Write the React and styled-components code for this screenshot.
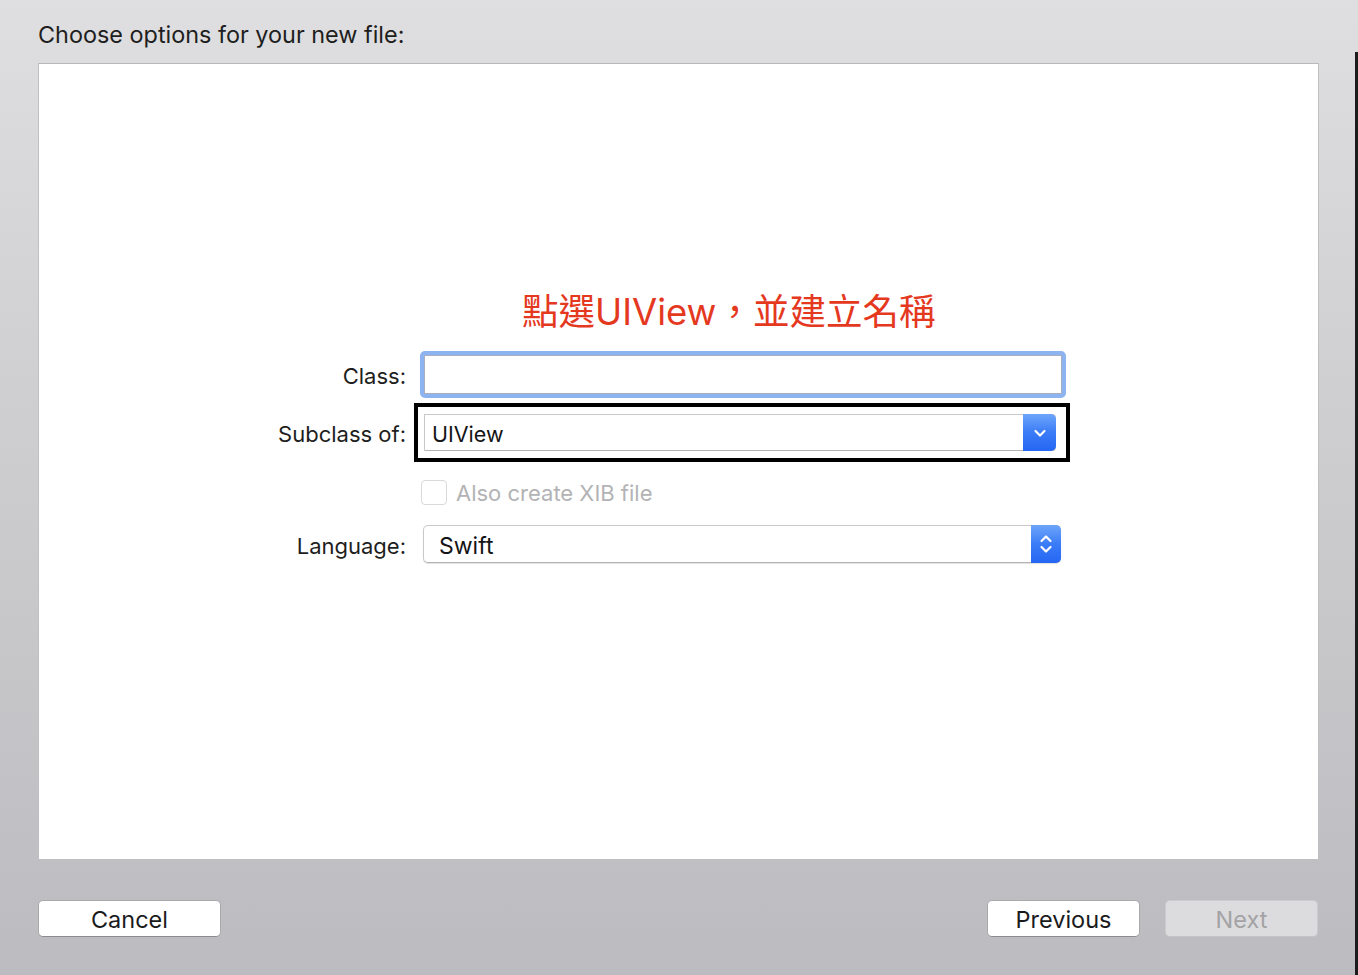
import styled, { createGlobalStyle } from "styled-components";

const GlobalStyle = createGlobalStyle`
    html, body {
        margin: 0;
        padding: 0;
    }
    body {
        font-family: Inter, "Noto Sans", "Noto Sans CJK TC", sans-serif;
        color: #1d1d1f;
    }
`;

const Sheet = styled.div`
    position: relative;
    box-sizing: border-box;
    width: 1358px;
    height: 975px;
    padding-left: 38px;
    display: flex;
    flex-direction: column;
    background: linear-gradient(180deg, #dfdfe1 0%, #cfcfd1 40%, #bcbbbf 100%);
    overflow: hidden;

    &::after {
        content: "";
        position: absolute;
        right: 0;
        top: 52px;
        bottom: 0;
        width: 3px;
        background: #1c1c1f;
    }
`;

const Title = styled.div`
    height: 63px;
    box-sizing: border-box;
    padding-top: 20px;
    font-size: 23.4px;
    line-height: 30px;
    color: #1e1e20;
`;

const Panel = styled.div`
    box-sizing: border-box;
    width: 1281px;
    height: 797px;
    background: #fff;
    border: 1px solid #c0c0c3;
    border-top-color: #b8b8bb;
    padding-top: 226px;
    display: flex;
    flex-direction: column;
`;

const Row = styled.div`
    display: grid;
    grid-template-columns: 367px 1fr;
    align-items: center;
    height: ${(p) => p.h}px;
    margin-top: ${(p) => p.top || 0}px;
`;

const Label = styled.div`
    text-align: right;
    font-size: 22px;
    padding-top: 3px;
    color: #1e1e20;
`;

const Cell = styled.div`
    display: flex;
    align-items: center;
    padding-left: ${(p) => p.indent}px;
`;

const Hint = styled.div`
    font-size: 36.5px;
    line-height: 44px;
    color: #e5391f;
    white-space: nowrap;
    font-family: Inter, "Noto Sans CJK TC", sans-serif;
`;

const FocusRing = styled.div`
    box-sizing: border-box;
    width: 646px;
    height: 47px;
    border: 4px solid #8db4f1;
    border-radius: 5px;
    background: #8db4f1;
`;

const TextField = styled.div`
    box-sizing: border-box;
    height: 100%;
    background: #fff;
    border: 1px solid #a7afc0;
`;

const Highlight = styled.div`
    box-sizing: border-box;
    width: 656px;
    height: 59px;
    border: 4px solid #000;
    padding: 7px 10px 7px 6px;
`;

const Select = styled.div`
    box-sizing: border-box;
    display: flex;
    align-items: center;
    width: ${(p) => p.w}px;
    height: ${(p) => p.h}px;
    background: #fff;
    border: 1px solid #c9c9cb;
    border-bottom-color: #b4b4b7;
    border-radius: ${(p) => (p.round ? "5px" : "0 4px 4px 0")};
    box-shadow: ${(p) => (p.round ? "0 1px 1px rgba(0,0,0,0.12)" : "none")};
`;

const SelectText = styled.div`
    flex: 1;
    padding-left: ${(p) => p.pad}px;
    padding-top: 3px;
    font-size: ${(p) => p.size}px;
    color: #141416;
`;

const Arrow = styled.div`
    align-self: stretch;
    width: ${(p) => p.w}px;
    margin: -1px -1px -1px 0;
    display: flex;
    align-items: center;
    justify-content: center;
    background: linear-gradient(180deg, #6ea5fa 0%, #3a7cf7 50%, #2566f3 100%);
    border-radius: 0 5px 5px 0;
`;

const Checkbox = styled.div`
    box-sizing: border-box;
    width: 26px;
    height: 25px;
    border: 1px solid #d9d9db;
    border-radius: 4px;
    background: #fff;
`;

const CheckLabel = styled.div`
    margin-left: 9px;
    padding-top: 2px;
    font-size: 22px;
    color: #b3b3b5;
`;

const Footer = styled.div`
    display: flex;
    align-items: center;
    width: 1280px;
    padding-top: 40px;
`;

const Button = styled.div`
    box-sizing: border-box;
    width: ${(p) => p.w}px;
    height: 37px;
    margin-left: ${(p) => p.gap || 0}px;
    padding-top: 2px;
    display: flex;
    align-items: center;
    justify-content: center;
    font-size: 23.5px;
    border-radius: 5px;
    background: ${(p) => (p.disabled ? "#dcdcde" : "#fff")};
    color: ${(p) => (p.disabled ? "#a3a3a5" : "#1a1a1c")};
    border: 1px solid ${(p) => (p.disabled ? "#cbcbcd" : "#a9a9ac")};
    border-bottom-color: ${(p) => (p.disabled ? "#c4c4c6" : "#8d8d90")};
`;

const Spacer = styled.div`
    flex: 1;
`;

const ChevronDown = () => (
    <svg width="14" height="10" viewBox="0 0 14 10">
        <path d="M2.5 3 L7 7.5 L11.5 3" fill="none" stroke="#fff" strokeWidth="2.2" strokeLinecap="round" strokeLinejoin="round" />
    </svg>
);

const Stepper = () => (
    <svg width="14" height="26" viewBox="0 0 14 26">
        <path d="M2.5 10 L7 5.5 L11.5 10" fill="none" stroke="#fff" strokeWidth="2.2" strokeLinecap="round" strokeLinejoin="round" />
        <path d="M2.5 16 L7 20.5 L11.5 16" fill="none" stroke="#fff" strokeWidth="2.2" strokeLinecap="round" strokeLinejoin="round" />
    </svg>
);

const App = () => {
    return (
        <>
            <GlobalStyle />
            <Sheet>
                <Title>Choose options for your new file:</Title>
                <Panel>
                    <Row h={44}>
                        <div />
                        <Cell indent={116}>
                            <Hint>點選UIView，並建立名稱</Hint>
                        </Cell>
                    </Row>
                    <Row h={47} top={17}>
                        <Label>Class:</Label>
                        <Cell indent={14}>
                            <FocusRing>
                                <TextField />
                            </FocusRing>
                        </Cell>
                    </Row>
                    <Row h={59} top={5}>
                        <Label>Subclass of:</Label>
                        <Cell indent={8}>
                            <Highlight>
                                <Select w={632} h={37}>
                                    <SelectText pad={7} size={21.5}>UIView</SelectText>
                                    <Arrow w={33}>
                                        <ChevronDown />
                                    </Arrow>
                                </Select>
                            </Highlight>
                        </Cell>
                    </Row>
                    <Row h={25} top={16}>
                        <div />
                        <Cell indent={15}>
                            <Checkbox />
                            <CheckLabel>Also create XIB file</CheckLabel>
                        </Cell>
                    </Row>
                    <Row h={38} top={22}>
                        <Label>Language:</Label>
                        <Cell indent={17}>
                            <Select w={638} h={38} round>
                                <SelectText pad={15} size={23}>Swift</SelectText>
                                <Arrow w={30}>
                                    <Stepper />
                                </Arrow>
                            </Select>
                        </Cell>
                    </Row>
                </Panel>
                <Footer>
                    <Button w={183}>Cancel</Button>
                    <Spacer />
                    <Button w={153}>Previous</Button>
                    <Button w={153} gap={25} disabled>Next</Button>
                </Footer>
            </Sheet>
        </>
    );
};

export default App;
